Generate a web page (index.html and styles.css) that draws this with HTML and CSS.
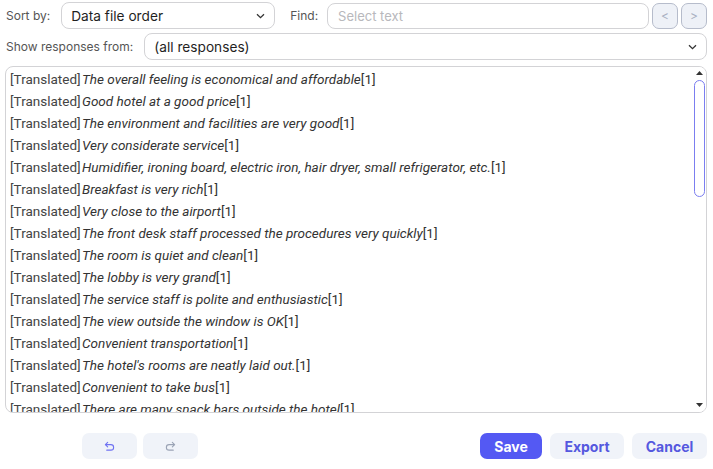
FILE: index.html
```html
<!DOCTYPE html>
<html>
<head>
<meta charset="utf-8">
<link rel="stylesheet" href="styles.css">
</head>
<body>
<div class="app">
  <div class="row row-sort">
    <span class="label">Sort by:</span>
    <div class="select sort-select"><span>Data file order</span><svg class="chev" width="9" height="6" viewBox="0 0 9 6"><path d="M1 1.2 L4.5 4.6 L8 1.2" fill="none" stroke="#333" stroke-width="1.3"/></svg></div>
    <span class="label find-label">Find:</span>
    <div class="input"><span class="placeholder">Select text</span></div>
    <button class="nav-btn">&lt;</button>
    <button class="nav-btn">&gt;</button>
  </div>
  <div class="row row-show">
    <span class="label">Show responses from:</span>
    <div class="select show-select"><span>(all responses)</span><svg class="chev" width="9" height="6" viewBox="0 0 9 6"><path d="M1 1.2 L4.5 4.6 L8 1.2" fill="none" stroke="#333" stroke-width="1.3"/></svg></div>
  </div>
  <div class="list">
    <div class="items">
      <div class="item"><span class="tag">[Translated]</span> <i>The overall feeling is economical and affordable</i>[1]</div>
      <div class="item"><span class="tag">[Translated]</span> <i>Good hotel at a good price</i>[1]</div>
      <div class="item"><span class="tag">[Translated]</span> <i>The environment and facilities are very good</i>[1]</div>
      <div class="item"><span class="tag">[Translated]</span> <i>Very considerate service</i>[1]</div>
      <div class="item"><span class="tag">[Translated]</span> <i>Humidifier, ironing board, electric iron, hair dryer, small refrigerator, etc.</i>[1]</div>
      <div class="item"><span class="tag">[Translated]</span> <i>Breakfast is very rich</i>[1]</div>
      <div class="item"><span class="tag">[Translated]</span> <i>Very close to the airport</i>[1]</div>
      <div class="item"><span class="tag">[Translated]</span> <i>The front desk staff processed the procedures very quickly</i>[1]</div>
      <div class="item"><span class="tag">[Translated]</span> <i>The room is quiet and clean</i>[1]</div>
      <div class="item"><span class="tag">[Translated]</span> <i>The lobby is very grand</i>[1]</div>
      <div class="item"><span class="tag">[Translated]</span> <i>The service staff is polite and enthusiastic</i>[1]</div>
      <div class="item"><span class="tag">[Translated]</span> <i>The view outside the window is OK</i>[1]</div>
      <div class="item"><span class="tag">[Translated]</span> <i>Convenient transportation</i>[1]</div>
      <div class="item"><span class="tag">[Translated]</span> <i>The hotel's rooms are neatly laid out.</i>[1]</div>
      <div class="item"><span class="tag">[Translated]</span> <i>Convenient to take bus</i>[1]</div>
      <div class="item"><span class="tag">[Translated]</span> <i>There are many snack bars outside the hotel</i>[1]</div>
    </div>
    <div class="scrollbar">
      <svg class="arrow" width="7" height="4" viewBox="0 0 7 4"><path d="M0 4 L3.5 0 L7 4 Z" fill="#333"/></svg>
      <div class="thumb"></div>
      <div class="track-fill"></div>
      <svg class="arrow" width="7" height="4" viewBox="0 0 7 4"><path d="M0 0 L3.5 4 L7 0 Z" fill="#333"/></svg>
    </div>
  </div>
  <div class="footer">
    <div class="history">
      <button class="icon-btn undo"><svg width="11" height="11" viewBox="0 0 12 12"><path d="M4 1.5 L1.5 4 L4 6.5 M1.5 4 H7.5 A3 3 0 0 1 7.5 10 H3" fill="none" stroke="#6f72f2" stroke-width="1.2" stroke-linecap="round" stroke-linejoin="round"/></svg></button>
      <button class="icon-btn redo"><svg width="11" height="11" viewBox="0 0 12 12"><path d="M8 1.5 L10.5 4 L8 6.5 M10.5 4 H4.5 A3 3 0 0 0 4.5 10 H9" fill="none" stroke="#9aa3b5" stroke-width="1.2" stroke-linecap="round" stroke-linejoin="round"/></svg></button>
    </div>
    <div class="actions">
      <button class="btn primary">Save</button>
      <button class="btn secondary">Export</button>
      <button class="btn secondary">Cancel</button>
    </div>
  </div>
</div>
</body>
</html>
```
FILE: styles.css
```css
* { box-sizing: border-box; }
html, body { margin: 0; padding: 0; background: #fff; }
body {
  font-family: Inter, "Noto Sans", sans-serif;
  font-size: 13px;
  color: #222;
  width: 713px;
  height: 469px;
  overflow: hidden;
}
.app {
  padding: 2px 6px 0 5px;
}
.row {
  display: flex;
  align-items: center;
  height: 27px;
}
.row-show { margin-top: 4px; }
.label {
  color: #555;
  padding-left: 1px;
  font-size: 12px;
  white-space: nowrap;
}
.select {
  display: flex;
  align-items: center;
  justify-content: space-between;
  height: 27px;
  border: 1px solid #d3d3d6;
  border-radius: 8px;
  padding: 0 9px 0 9px;
  font-size: 13.7px;
  color: #1f1f1f;
}
.sort-select { width: 214px; margin-left: 11px; }
.show-select { flex: 1; margin-left: 11px; }
.chev { margin-top: 1px; }
.find-label { margin-left: 14px; }
.input {
  flex: 1;
  height: 26px;
  margin-left: 9px;
  border: 1px solid #d3d3d6;
  border-radius: 8px;
  display: flex;
  align-items: center;
  padding-left: 10px;
}
.placeholder { color: #b8b8bc; font-size: 13px; }
.nav-btn {
  width: 26px;
  height: 26px;
  margin-left: 3px;
  border: 1px solid #b6bccb;
  border-radius: 7px;
  background: #eef1f7;
  color: #a9b0c2;
  font-family: Inter, sans-serif;
  font-size: 12px;
  padding: 0;
}
.nav-btn + .nav-btn { margin-left: 3px; }
.list {
  position: relative;
  margin-top: 6px;
  height: 347px;
  border: 1px solid #d3d3d6;
  border-radius: 8px;
  overflow: hidden;
}
.items {
  padding: 1px 20px 0 4px;
  font-family: Roboto, "Liberation Sans", sans-serif;
  font-size: 13.5px;
  color: #333;
}
.item {
  height: 22px;
  line-height: 22px;
  white-space: nowrap;
}
.item i { font-style: italic; color: #333; }
.tag { color: #444; margin-right: -2px; }
.scrollbar {
  position: absolute;
  top: 0;
  right: 0;
  width: 13px;
  height: 100%;
  display: flex;
  flex-direction: column;
  align-items: center;
  padding: 4px 0 5px;
  background: #fff;
}
.arrow { flex: none; }
.thumb {
  margin-top: 5px;
  width: 11px;
  height: 117px;
  border: 1px solid #7b7ef0;
  border-radius: 6px;
}
.track-fill { flex: 1; }
.footer {
  display: flex;
  justify-content: space-between;
  align-items: center;
  margin-top: 20px;
  padding-left: 77px;
}
.history { display: flex; gap: 6px; }
.icon-btn {
  width: 55px;
  height: 26px;
  border: none;
  border-radius: 7px;
  background: #f0f3f9;
  display: flex;
  align-items: center;
  justify-content: center;
  padding: 0;
}
.actions { display: flex; gap: 8px; }
.btn {
  height: 26px;
  border: none;
  border-radius: 7px;
  font-family: Inter, sans-serif;
  font-weight: 700;
  font-size: 14px;
  padding: 0;
}
.primary { width: 62px; background: #5459f3; color: #fff; }
.secondary { background: #f0f3f9; color: #5558df; }
.secondary:nth-child(2) { width: 74px; }
.secondary:nth-child(3) { width: 75px; }
```
